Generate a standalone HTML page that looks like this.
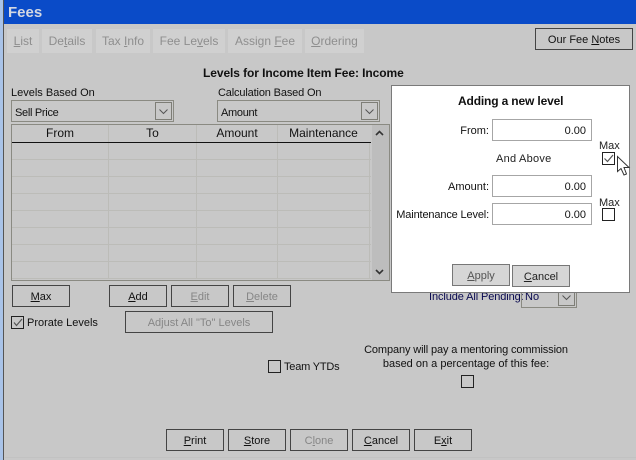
<!DOCTYPE html>
<html><head><meta charset="utf-8"><style>
html,body{margin:0;padding:0}
body{width:636px;height:460px;overflow:hidden;position:relative;background:#c8c8c8;font-family:"Liberation Sans",sans-serif;font-size:11px;color:#111;}
div,span.t{position:absolute;box-sizing:border-box}
.t{white-space:nowrap;line-height:14px}
.tab{top:29px;height:24px;background:#d0d0d0;color:#8e8e8e;text-align:center;line-height:25px;font-size:12px;white-space:nowrap}
.btn{height:22px;width:58px;border:1px solid #444;text-align:center;line-height:23px;white-space:nowrap}
.dis{color:#868686}
.cb{width:13px;height:13px;border:1px solid #222}
.dd{border:1px solid #8a8a82;height:22px}
.ddb{border:1px solid #7d7d76;width:17px;height:18px;top:1px;right:1px}
.inp{left:492px;width:100px;height:22px;border:1px solid #a6a6a6;background:#fff;text-align:right;padding-right:5px;line-height:22px}
.lbl{right:147px;text-align:right}
.hl{left:12px;width:359px;height:1px;background:#bcbcb8}
.vl{top:143px;width:1px;height:136px;background:#bcbcb8}
.hc{top:126px;text-align:center;line-height:14px;font-size:12px}
u{text-underline-offset:1px}
svg{position:absolute;overflow:visible}
</style></head><body>
<div style="left:0;top:0;width:3px;height:460px;background:#a9c3e8"></div>
<div style="left:3px;top:0;width:1px;height:460px;background:#555"></div>
<div style="left:4px;top:0;width:632px;height:24px;background:#0a4bc8"></div>
<div style="left:5px;top:457px;width:631px;height:1px;background:#c2c2c2"></div>
<div class="t" style="left:8px;top:4px;font-size:15px;font-weight:bold;color:#d4d8e2;line-height:17px">Fees</div>

<div class="tab" style="left:7px;width:32px"><u>L</u>ist</div>
<div class="tab" style="left:42px;width:50px">De<u>t</u>ails</div>
<div class="tab" style="left:96px;width:54px">Tax <u>I</u>nfo</div>
<div class="tab" style="left:153px;width:72px">Fee Le<u>v</u>els</div>
<div class="tab" style="left:228px;width:74px">Assign <u>F</u>ee</div>
<div class="tab" style="left:305px;width:59px"><u>O</u>rdering</div>

<div class="btn" style="left:535px;top:28px;width:98px">Our Fee <u>N</u>otes</div>
<div class="t" style="left:203px;top:66px;font-weight:bold;font-size:12px;letter-spacing:-.08px">Levels for Income Item Fee: Income</div>

<div class="t" style="left:11px;top:86px">Levels Based On</div>
<div class="dd" style="left:11px;top:100px;width:163px"><div class="t" style="left:3px;top:5px;letter-spacing:-.3px">Sell Price</div>
<div class="ddb"><svg width="15" height="16" style="left:0;top:0"><path d="M3.5 6.5 L7.5 10.5 L11.500 6.500" fill="none" stroke="#555" stroke-width="1"/></svg></div></div>
<div class="t" style="left:218px;top:86px;letter-spacing:-.15px">Calculation Based On</div>
<div class="dd" style="left:217px;top:100px;width:163px"><div class="t" style="left:3px;top:5px;letter-spacing:-.3px">Amount</div>
<div class="ddb"><svg width="15" height="16" style="left:0;top:0"><path d="M3.5 6.5 L7.5 10.500 L11.500 6.500" fill="none" stroke="#555" stroke-width="1"/></svg></div></div>

<div style="left:11px;top:124px;width:379px;height:157px;border:1px solid #8a8a82"></div>
<div style="left:372px;top:125px;width:17px;height:155px;background:#bdbdbd"></div>
<div class="hc" style="left:12px;width:96px">From</div>
<div class="hc" style="left:109px;width:87px">To</div>
<div class="hc" style="left:197px;width:80px">Amount</div>
<div class="hc" style="left:278px;width:91px">Maintenance</div>
<div style="left:108px;top:125px;width:1px;height:17px;background:#bcbcb8"></div>
<div style="left:196px;top:125px;width:1px;height:17px;background:#bcbcb8"></div>
<div style="left:277px;top:125px;width:1px;height:17px;background:#bcbcb8"></div>
<div style="left:12px;top:142px;width:359px;height:1px;background:#111"></div>
<div class="hl" style="top:159px"></div><div class="hl" style="top:176px"></div><div class="hl" style="top:193px"></div><div class="hl" style="top:210px"></div><div class="hl" style="top:227px"></div><div class="hl" style="top:244px"></div><div class="hl" style="top:261px"></div><div class="hl" style="top:278px"></div>
<div class="vl" style="left:108px"></div><div class="vl" style="left:196px"></div><div class="vl" style="left:277px"></div><div class="vl" style="left:369px"></div>
<svg width="10" height="6" style="left:375px;top:130px"><path d="M1 5 L4.500 1.500 L8 5" fill="none" stroke="#333" stroke-width="1.600"/></svg>
<svg width="10" height="6" style="left:375px;top:269px"><path d="M1 1 L4.500 4.500 L8 1" fill="none" stroke="#333" stroke-width="1.600"/></svg>

<div class="btn" style="left:12px;top:285px"><u>M</u>ax</div>
<div class="btn" style="left:109px;top:285px"><u>A</u>dd</div>
<div class="btn dis" style="left:171px;top:285px"><u>E</u>dit</div>
<div class="btn dis" style="left:233px;top:285px"><u>D</u>elete</div>
<div class="cb" style="left:11px;top:316px"><svg width="11" height="11" style="left:0;top:0"><path d="M2 5.500 L4.500 8.500 L10 2" fill="none" stroke="#555" stroke-width="1.200"/></svg></div>
<div class="t" style="left:27px;top:316px">Prorate Levels</div>
<div class="btn dis" style="left:125px;top:311px;width:148px">Adjust All "To" Levels</div>

<div class="cb" style="left:268px;top:360px"></div>
<div class="t" style="left:284px;top:360px;letter-spacing:-.2px">Team YTDs</div>
<div class="t" style="left:346px;width:240px;top:343px;text-align:center;letter-spacing:-.12px">Company will pay a mentoring commission</div>
<div class="t" style="left:346px;width:240px;top:357px;text-align:center">based on a percentage of this fee:</div>
<div class="cb" style="left:461px;top:375px"></div>

<div class="btn" style="left:166px;top:429px"><u>P</u>rint</div>
<div class="btn" style="left:228px;top:429px"><u>S</u>tore</div>
<div class="btn dis" style="left:290px;top:429px">C<u>l</u>one</div>
<div class="btn" style="left:352px;top:429px"><u>C</u>ancel</div>
<div class="btn" style="left:414px;top:429px">E<u>x</u>it</div>

<div class="t" style="left:429px;top:290px;color:#0a0a50;letter-spacing:-.1px">Include All Pending:</div>
<div class="t" style="left:525px;top:290px;color:#0a0a50">No</div>
<div style="left:521px;top:285px;width:56px;height:23px;border:1px solid #8a8a82;border-top:0"></div>
<div style="left:558px;top:289px;width:17px;height:17px;border:1px solid #7d7d76"><svg width="15" height="15" style="left:0;top:0"><path d="M3.5 5.5 L7.5 9.500 L11.500 5.500" fill="none" stroke="#555" stroke-width="1"/></svg></div>

<div style="left:391px;top:85px;width:239px;height:208px;background:#fff;border:1px solid #7a7a7a"></div>
<div class="t" style="left:458px;top:94px;font-weight:bold;font-size:12px;letter-spacing:-.15px">Adding a new level</div>
<div class="t lbl" style="top:124px">From:</div>
<div class="inp" style="top:119px">0.00</div>
<div class="t" style="left:496px;top:152px;letter-spacing:.25px;color:#222">And Above</div>
<div class="t" style="left:599px;top:139px;color:#222">Max</div>
<div class="cb" style="left:602px;top:152px"><svg width="11" height="11" style="left:0;top:0"><path d="M1.500 5.500 L4.500 8.500 L10 2" fill="none" stroke="#555" stroke-width="1.200"/></svg></div>
<svg width="14" height="22" style="left:617px;top:156px"><path d="M0.500 0.500 L0.500 15.500 L4 12.500 L7 19 L9.500 18 L7 11.500 L12 11.500 Z" fill="#fff" stroke="#333" stroke-width="1"/></svg>
<div class="t lbl" style="top:180px">Amount:</div>
<div class="inp" style="top:175px">0.00</div>
<div class="t lbl" style="top:208px;letter-spacing:-.15px">Maintenance Level:</div>
<div class="inp" style="top:203px">0.00</div>
<div class="t" style="left:599px;top:196px;color:#222">Max</div>
<div class="cb" style="left:602px;top:208px"></div>
<div class="btn" style="left:452px;top:264px;background:#d6d6d6;border-color:#777;color:#555"><u>A</u>pply</div>
<div class="btn" style="left:512px;top:265px;background:#d6d6d6;border-color:#777;color:#222"><u>C</u>ancel</div>
</body></html>
